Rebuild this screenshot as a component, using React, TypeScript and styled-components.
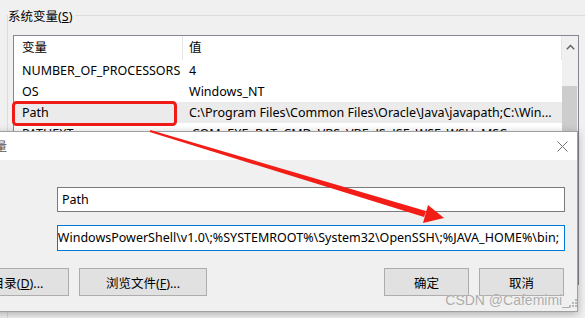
import styled, { createGlobalStyle } from "styled-components";

const GlobalStyle = createGlobalStyle`
	html, body {
		margin: 0;
		padding: 0;
		background: #f0f0f0;
		overflow: hidden;
	}
	body {
		font-family: "Noto Sans", "Noto Sans CJK SC", sans-serif;
		font-size: 12.5px;
		color: #000;
	}
`;

const Screen = styled.div`
	position: relative;
	width: 585px;
	height: 318px;
	overflow: hidden;
	background: #f0f0f0;
`;

const Window = styled.div`
	padding: 8px 0 0 7px;
`;

const GroupBox = styled.div`
	margin-top: 7px;
	width: 600px;
	border-top: 1px solid #dcdcdc;
	border-left: 1px solid #dcdcdc;
	padding-bottom: 20px;
`;

const Legend = styled.div`
	margin-top: -8px;
	width: fit-content;
	height: 17px;
	line-height: 17px;
	padding-right: 3px;
	background: #f0f0f0;
`;

const ListBox = styled.div`
	display: flex;
	margin: 10px 0 0 5px;
	width: 566px;
	height: 250px;
	box-sizing: border-box;
	border: 1px solid #828790;
	background: #fff;
`;

const List = styled.div`
	flex: 1;
	display: flex;
	flex-direction: column;
`;

const Row = styled.div<{ $header?: boolean; $selected?: boolean }>`
	display: flex;
	height: ${(p) => (p.$header ? "24px" : "21px")};
	line-height: ${(p) => (p.$header ? "24px" : "21px")};
	background: ${(p) => (p.$selected ? "#ebebeb" : "#fff")};
	border-right: ${(p) => (p.$header ? "1px solid #e5e5e5" : "none")};
	white-space: nowrap;
`;

const NameCell = styled.div<{ $header?: boolean }>`
	width: 169px;
	box-sizing: border-box;
	padding-left: 8px;
	border-right: ${(p) => (p.$header ? "1px solid #e5e5e5" : "1px solid transparent")};
`;

const ValueCell = styled.div`
	flex: 1;
	padding-left: 6px;
	overflow: hidden;
`;

const ScrollBar = styled.div`
	display: flex;
	flex-direction: column;
	width: 16px;
	background: #f0f0f0;
`;

const ScrollArrow = styled.div`
	display: flex;
	align-items: center;
	justify-content: center;
	height: 20px;
	padding-top: 1px;
	color: #606060;
`;

const ScrollThumb = styled.div`
	margin: 29px 1px 0 0;
	flex: 1;
	background: #cdcdcd;
`;

const UnderButtons = styled.div`
	display: flex;
	gap: 10px;
	margin: 33px 0 0 386px;
`;

const Button = styled.button<{ $w: number }>`
	width: ${(p) => p.$w}px;
	height: 28px;
	flex: none;
	box-sizing: border-box;
	border: 1px solid #adadad;
	background: #e1e1e1;
	font: inherit;
	color: #000;
	padding: 0;
	white-space: nowrap;
`;

const Dialog = styled.div`
	position: absolute;
	left: -72px;
	top: 131px;
	width: 650px;
	box-sizing: border-box;
	border: 1px solid #a0a0a0;
	box-shadow: 0 2px 8px rgba(0, 0, 0, 0.28);
	background: #f0f0f0;
`;

const TitleBar = styled.div`
	display: flex;
	align-items: center;
	height: 28px;
	background: #fff;
`;

const Title = styled.div`
	flex: 1;
	padding-left: 6px;
	font-size: 12px;
	color: #555;
	white-space: nowrap;
`;

const CloseButton = styled.div`
	display: flex;
	align-items: center;
	justify-content: center;
	width: 30px;
	height: 28px;
	color: #777;
`;

const Body = styled.div`
	padding: 27px 12px 15px 12px;
`;

const Fields = styled.div`
	display: grid;
	grid-template-columns: 124px 508px;
	margin-left: -8px;
	row-gap: 13px;
	align-items: center;
`;

const Label = styled.div`
	white-space: nowrap;
`;

const Input = styled.div<{ $focused?: boolean }>`
	display: flex;
	justify-content: ${(p) => (p.$focused ? "flex-end" : "flex-start")};
	height: ${(p) => (p.$focused ? "26px" : "25px")};
	line-height: ${(p) => (p.$focused ? "24px" : "23px")};
	box-sizing: border-box;
	padding: 0 5px 0 4px;
	border: 1px solid ${(p) => (p.$focused ? "#0078d7" : "#7a7a7a")};
	background: #fff;
	white-space: nowrap;
	overflow: hidden;
`;

const ButtonRow = styled.div`
	display: flex;
	gap: 10px;
	margin-top: 17px;
	padding-right: 1px;
`;

const Spacer = styled.div`
	flex: 1;
`;

const Watermark = styled.div`
	position: absolute;
	right: 15px;
	top: 292px;
	font-family: "Liberation Sans", Arial, sans-serif;
	font-size: 14px;
	color: #acacac;
	text-shadow: 0 0 1px rgba(255, 255, 255, 0.8);
`;

const Grip = styled.svg`
	position: absolute;
	left: 569px;
	top: 299px;
`;

const Annotation = styled.svg`
	position: absolute;
	left: 0;
	top: 0;
	pointer-events: none;
`;

const rows = [
	{ name: "NUMBER_OF_PROCESSORS", value: "4" },
	{ name: "OS", value: "Windows_NT" },
	{ name: "Path", value: "C:\\Program Files\\Common Files\\Oracle\\Java\\javapath;C:\\Win...", selected: true },
	{ name: "PATHEXT", value: ".COM;.EXE;.BAT;.CMD;.VBS;.VBE;.JS;.JSE;.WSF;.WSH;.MSC" },
	{ name: "PROCESSOR_ARCHITECTURE", value: "AMD64" },
];

const pathValue =
	"%SystemRoot%\\system32;%SystemRoot%;%SystemRoot%\\System32\\Wbem;%SYSTEMROOT%\\System32\\WindowsPowerShell\\v1.0\\;%SYSTEMROOT%\\System32\\OpenSSH\\;%JAVA_HOME%\\bin;";

const App = () => {
	return (
		<Screen>
			<GlobalStyle />
			<Window>
				<GroupBox>
					<Legend>
						系统变量(<u>S</u>)
					</Legend>
					<ListBox>
						<List>
							<Row $header>
								<NameCell $header>变量</NameCell>
								<ValueCell>值</ValueCell>
							</Row>
							{rows.map((r) => (
								<Row key={r.name} $selected={r.selected}>
									<NameCell>{r.name}</NameCell>
									<ValueCell>{r.value}</ValueCell>
								</Row>
							))}
						</List>
						<ScrollBar>
							<ScrollArrow>
								<svg width="9" height="6" viewBox="0 0 9 6">
									<path d="M0.8 5.2 L4.5 1.5 L8.2 5.2" fill="none" stroke="currentColor" strokeWidth="1.4" />
								</svg>
							</ScrollArrow>
							<ScrollThumb />
						</ScrollBar>
					</ListBox>
					<UnderButtons>
						<Button $w={85}>编辑(<u>I</u>)...</Button>
						<Button $w={85}>删除(<u>L</u>)</Button>
					</UnderButtons>
				</GroupBox>
			</Window>

			<Dialog>
				<TitleBar>
					<Title>编辑系统变量</Title>
					<CloseButton>
						<svg width="11" height="11" viewBox="0 0 11 11">
							<path d="M0.5 0.5 L10.5 10.5 M10.5 0.5 L0.5 10.5" stroke="currentColor" strokeWidth="1" />
						</svg>
					</CloseButton>
				</TitleBar>
				<Body>
					<Fields>
						<Label>
							变量名(<u>N</u>):
						</Label>
						<Input>Path</Input>
						<Label>
							变量值(<u>V</u>):
						</Label>
						<Input $focused>{pathValue}</Input>
					</Fields>
					<ButtonRow>
						<Button $w={128}>
							浏览目录(<u>D</u>)...
						</Button>
						<Button $w={128}>
							浏览文件(<u>F</u>)...
						</Button>
						<Spacer />
						<Button $w={85}>确定</Button>
						<Button $w={85}>取消</Button>
					</ButtonRow>
				</Body>
			</Dialog>

			<Watermark>CSDN @Cafemimi_</Watermark>
			<Grip width="9" height="9" viewBox="0 0 9 9">
				<g fill="#b8b8b8">
					<rect x="6" y="0" width="2" height="2" />
					<rect x="3" y="3" width="2" height="2" />
					<rect x="6" y="3" width="2" height="2" />
					<rect x="0" y="6" width="2" height="2" />
					<rect x="3" y="6" width="2" height="2" />
					<rect x="6" y="6" width="2" height="2" />
				</g>
			</Grip>

			<Annotation width="585" height="318" viewBox="0 0 585 318">
				<rect x="13.5" y="102.5" width="162" height="22" rx="3" fill="none" stroke="#ee1b17" strokeWidth="3" />
				<polygon points="150.3,130 149.7,132 424.1,216.9 425.9,211.1" fill="#f21d16" />
				<polygon points="428,205 444,218 423,223" fill="#f21d16" />
			</Annotation>
		</Screen>
	);
};

export default App;
